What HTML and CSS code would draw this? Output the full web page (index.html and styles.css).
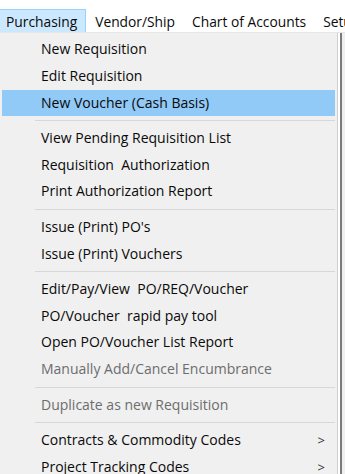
FILE: index.html
```html
<!DOCTYPE html>
<html>
<head>
<meta charset="utf-8">
<link rel="stylesheet" href="styles.css">
</head>
<body>
<div class="app">
  <div class="menubar">
    <div class="mb-item active">Purchasing</div>
    <div class="mb-item">Vendor/Ship</div>
    <div class="mb-item">Chart of Accounts</div>
    <div class="mb-item">Setup</div>
  </div>
  <div class="main">
    <div class="dropdown">
      <div class="item">New Requisition</div>
      <div class="item">Edit Requisition</div>
      <div class="item hover">New Voucher (Cash Basis)</div>
      <div class="sep"></div>
      <div class="item">View Pending Requisition List</div>
      <div class="item">Requisition&nbsp; Authorization</div>
      <div class="item">Print Authorization Report</div>
      <div class="sep"></div>
      <div class="item">Issue (Print) PO's</div>
      <div class="item">Issue (Print) Vouchers</div>
      <div class="sep"></div>
      <div class="item">Edit/Pay/View&nbsp; PO/REQ/Voucher</div>
      <div class="item">PO/Voucher&nbsp; rapid pay tool</div>
      <div class="item">Open PO/Voucher List Report</div>
      <div class="item disabled">Manually Add/Cancel Encumbrance</div>
      <div class="sep"></div>
      <div class="item disabled">Duplicate as new Requisition</div>
      <div class="sep"></div>
      <div class="item sub"><span>Contracts &amp; Commodity Codes</span><span class="arrow">&gt;</span></div>
      <div class="item sub"><span>Project Tracking Codes</span><span class="arrow">&gt;</span></div>
    </div>
    <div class="behind"></div>
  </div>
</div>
</body>
</html>
```
FILE: styles.css
```css
html, body {
  margin: 0;
  padding: 0;
  background: #ffffff;
  overflow: hidden;
}
.app {
  width: 345px;
  height: 474px;
  font-family: "Open Sans", "Noto Sans", sans-serif;
  font-size: 14px;
  color: #0a0a0a;
  overflow: hidden;
}
.menubar {
  display: flex;
  height: 33px;
  padding-top: 9px;
  box-sizing: border-box;
  background: #fff;
  border-bottom: 1px solid #e6e6e6;
  white-space: nowrap;
  font-size: 13.8px;
}
.mb-item {
  padding: 0 7px 0 6px;
  margin-right: 2px;
  line-height: 23px;
  white-space: nowrap;
  border: 1px solid transparent;
  border-bottom: none;
}
.mb-item.active {
  background: #cce8ff;
  border-color: #99d1ff;
  padding: 0 8px 0 6px;
  margin-left: -1px;
}
.main {
  display: flex;
  height: 441px;
}
.dropdown {
  width: 338px;
  flex: none;
  background: #f0f0f0;
  border-right: 1px solid #cfcfcf;
  padding: 3px 2px 0 0;
  box-sizing: border-box;
}
.item {
  height: 26.8px;
  line-height: 26.8px;
  padding-left: 39px;
  white-space: nowrap;
  margin-left: 2px;
}
.item.hover {
  background: #91c9f7;
}
.item.disabled {
  color: #6d6d6d;
}
.item.sub {
  display: flex;
  justify-content: space-between;
  padding-right: 10px;
}
.arrow {
  font-size: 13px;
  color: #333;
}
.sep {
  height: 8.5px;
  position: relative;
}
.sep::after {
  content: "";
  position: absolute;
  left: 35px;
  right: 0;
  top: 4px;
  height: 1px;
  background: #d7d7d7;
}
.behind {
  flex: 1;
  background: #efefef;
  border-left: 2px solid #7a7a7a;
  margin-left: 2px;
}
```
